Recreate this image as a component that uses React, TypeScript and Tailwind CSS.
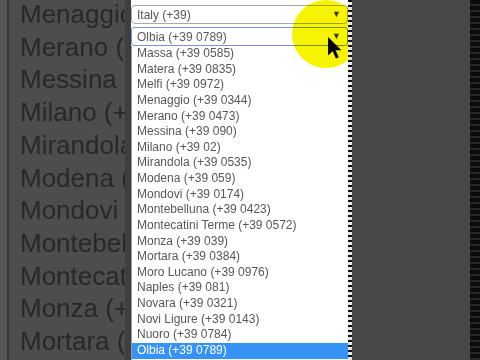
const bigRows = [
  "Menaggio",
  "Merano (+",
  "Messina (",
  "Milano (+",
  "Mirandola",
  "Modena (",
  "Mondovi (",
  "Montebell",
  "Montecati",
  "Monza (+",
  "Mortara (",
];

const cities = [
  "Massa (+39 0585)",
  "Matera (+39 0835)",
  "Melfi (+39 0972)",
  "Menaggio (+39 0344)",
  "Merano (+39 0473)",
  "Messina (+39 090)",
  "Milano (+39 02)",
  "Mirandola (+39 0535)",
  "Modena (+39 059)",
  "Mondovi (+39 0174)",
  "Montebelluna (+39 0423)",
  "Montecatini Terme (+39 0572)",
  "Monza (+39 039)",
  "Mortara (+39 0384)",
  "Moro Lucano (+39 0976)",
  "Naples (+39 081)",
  "Novara (+39 0321)",
  "Novi Ligure (+39 0143)",
  "Nuoro (+39 0784)",
  "Olbia (+39 0789)",
];

const selected = "Olbia (+39 0789)";

function Arrow() {
  return <span className="text-[9px] leading-none text-[#3b3b78]">▼</span>;
}

export default function App() {
  return (
    <div className="w-[480px] h-[360px] flex overflow-hidden bg-[#4d4d4d] font-['Liberation_Sans',Arial,sans-serif]">
      {/* blurred page behind the zoom */}
      <div className="w-[7px] bg-[#575757]" />
      <div className="w-[2px] bg-[#363636]" />
      <div className="w-[116px] overflow-hidden pl-[11px] blur-[0.6px]">
        <div className="mt-[-2px] flex flex-col">
          {bigRows.map((r) => (
            <div key={r} className="text-[26px] leading-[32.7px] whitespace-nowrap text-[#282828]">
              {r}
            </div>
          ))}
        </div>
      </div>
      <div className="w-[6px] bg-[#3f3f3f]" />

      {/* select + open list */}
      <div className="relative w-[217px] bg-white overflow-hidden flex flex-col">
        <div className="pt-[5px] flex flex-col gap-[3px]">
          <div className="h-[19px] rounded-[4px] border border-[#a9a9a9] bg-white pl-[5px] pr-[6px] flex items-center justify-between text-[12px] text-[#555]">
            <span>Italy (+39)</span>
            <Arrow />
          </div>
          <div className="h-[19px] rounded-[3px] border border-[#7d95c4] bg-white pl-[5px] pr-[6px] flex items-center justify-between text-[12px] text-[#5a5a5a]">
            <span>{selected}</span>
            <Arrow />
          </div>
        </div>
        <div className="flex-1 border-l border-[#9a9a9a] flex flex-col">
          {cities.map((c) => (
            <div
              key={c}
              className={
                c === selected
                  ? "h-[15.63px] pl-[5px] text-[12px] leading-[15.63px] whitespace-nowrap bg-[#3593f6] text-white"
                  : "h-[15.63px] pl-[5px] text-[12px] leading-[15.63px] whitespace-nowrap text-[#575757]"
              }
            >
              {c}
            </div>
          ))}
        </div>

        {/* click highlight and pointer */}
        <div className="absolute left-[161px] top-[0px] w-[68px] h-[68px] rounded-full bg-[#f6f400] mix-blend-multiply" />
        <svg className="absolute left-[197px] top-[37px]" width="14" height="22" viewBox="0 0 12 19">
          <path d="M0 0 L0 16 L4 12.3 L6.8 18.6 L9.2 17.5 L6.5 11.5 L11.5 11.5 Z" fill="#000" />
        </svg>
      </div>

      <div className="w-[4px] bg-[repeating-linear-gradient(180deg,#111_0px,#111_2px,#e6e6e6_2px,#e6e6e6_5px)]" />
      <div className="w-[118px] bg-[#484848]" />
      <div className="w-[10px] bg-[repeating-linear-gradient(180deg,#0c0c0c_0px,#0c0c0c_4px,#262626_4px,#262626_6px)]" />
    </div>
  );
}
